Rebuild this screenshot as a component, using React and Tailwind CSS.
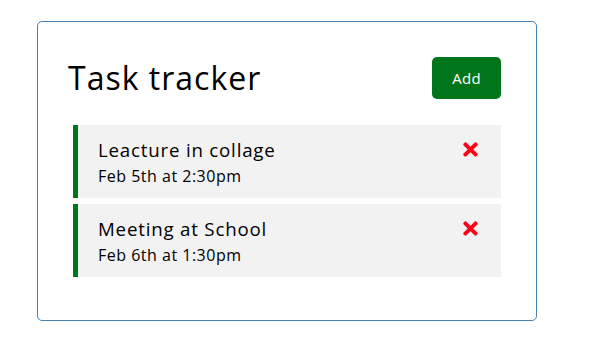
import { FaTimes } from 'react-icons/fa'

const tasks = [
    { id: 1, text: 'Leacture in collage', day: 'Feb 5th at 2:30pm', reminder: true },
    { id: 2, text: 'Meeting at School', day: 'Feb 6th at 1:30pm', reminder: true },
]

const Task = ({ task }) => (
    <div
        className={`bg-[#f2f2f2] mx-[5px] mb-[6px] py-[10px] px-5 cursor-pointer ${task.reminder ? 'border-l-[5px] border-[#00751a]' : ''}`}
    >
        <h3 className="flex items-center justify-between text-[18.7px] leading-[29px] tracking-[0.8px] font-normal text-black">
            {task.text}
            <FaTimes size={21} className="text-[#ff0018]" />
        </h3>
        <p className="text-[16px] leading-[24px] tracking-[0.5px] text-black">{task.day}</p>
    </div>
)

export default function App() {
    return (
        <div className="min-h-[352px] bg-white pt-[21px] font-['Open_Sans',sans-serif]">
            <div className="box-border w-[500px] min-h-[300px] ml-[37px] border border-[#4682b4] rounded-[5px] p-[30px]">
                <header className="flex items-center justify-between mb-[21px]">
                    <h1 className="text-[32px] leading-[48px] tracking-[1px] font-normal text-black">Task tracker</h1>
                    <button className="m-[5px] px-5 py-[10px] rounded-[5px] bg-[#00751a] text-white text-[15px] leading-[22px] tracking-[0.3px] font-medium cursor-pointer">
                        Add
                    </button>
                </header>
                {tasks.map((t) => (
                    <Task key={t.id} task={t} />
                ))}
            </div>
        </div>
    )
}
